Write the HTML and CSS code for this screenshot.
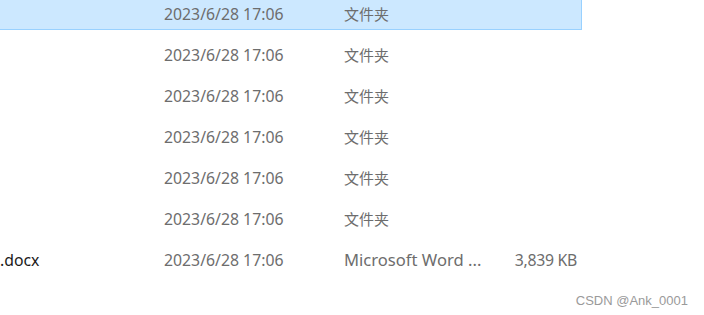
FILE: index.html
```html
<!DOCTYPE html>
<html lang="zh-CN">

<head>
    <meta charset="utf-8" />
    <title>文件列表</title>
    <link rel="stylesheet" href="styles.css">
</head>

<body>
    <ul class="files">
        <li class="row selected">
            <span class="name"></span>
            <span class="date">2023/6/28 17:06</span>
            <span class="type folder">文件夹</span>
            <span class="size"></span>
        </li>
        <li class="row">
            <span class="name"></span>
            <span class="date">2023/6/28 17:06</span>
            <span class="type folder">文件夹</span>
            <span class="size"></span>
        </li>
        <li class="row">
            <span class="name"></span>
            <span class="date">2023/6/28 17:06</span>
            <span class="type folder">文件夹</span>
            <span class="size"></span>
        </li>
        <li class="row">
            <span class="name"></span>
            <span class="date">2023/6/28 17:06</span>
            <span class="type folder">文件夹</span>
            <span class="size"></span>
        </li>
        <li class="row">
            <span class="name"></span>
            <span class="date">2023/6/28 17:06</span>
            <span class="type folder">文件夹</span>
            <span class="size"></span>
        </li>
        <li class="row">
            <span class="name"></span>
            <span class="date">2023/6/28 17:06</span>
            <span class="type folder">文件夹</span>
            <span class="size"></span>
        </li>
        <li class="row">
            <span class="name">.docx</span>
            <span class="date">2023/6/28 17:06</span>
            <span class="type">Microsoft Word ...</span>
            <span class="size">3,839 KB</span>
        </li>
    </ul>

    <p class="watermark">CSDN @Ank_0001</p>
</body>

</html>
```

FILE: styles.css
```css
*,
*::before,
*::after {
    margin: 0;
    padding: 0;
    box-sizing: border-box;
}

body {
    background: #ffffff;
    font-family: "Noto Sans", "Noto Sans CJK SC", sans-serif;
    font-size: 15.8px;
    overflow: hidden;
}

.files {
    list-style: none;
    margin: -1px 0 0 -1px;
    width: 583px;
}

.row {
    height: 31px;
    margin-bottom: 10px;
    padding-bottom: 2px;
    display: grid;
    grid-template-columns: 164px 180px 1fr 90px;
    align-items: center;
    border: 1px solid transparent;
    color: #6d6d6d;
}

.row.selected {
    background: #cce8ff;
    border-color: #99d1ff;
}

.name {
    color: #1a1a1a;
}

.type {
    font-size: 16.6px;
}

.type.folder {
    font-size: 15px;
}

.size {
    text-align: right;
    padding-right: 4px;
    letter-spacing: -0.3px;
}

.watermark {
    font-family: "Liberation Sans", Arial, sans-serif;
    font-size: 13px;
    color: #9a9a9a;
    text-align: right;
    padding-right: 16px;
    margin-top: 17px;
}
```
